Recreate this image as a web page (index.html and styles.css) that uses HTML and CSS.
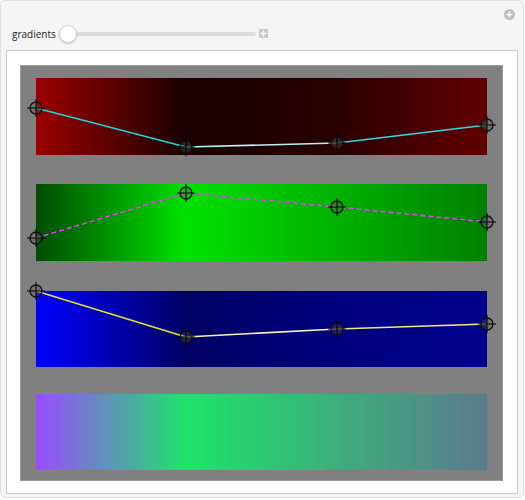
FILE: index.html
```html
<!DOCTYPE html>
<html>
<head>
<meta charset="utf-8">
<link rel="stylesheet" href="styles.css">
</head>
<body>
<div class="panel">
  <div class="corner-btn"><svg width="11" height="11" viewBox="0 0 11 11"><circle cx="5.5" cy="5.5" r="5.5" fill="#bdbdbd"/><path d="M5.5 2.5v6M2.5 5.5h6" stroke="#fff" stroke-width="1.6"/></svg></div>
  <div class="controls">
    <span class="label">gradients</span>
    <div class="slider">
      <div class="track"></div>
      <div class="thumb"></div>
    </div>
    <div class="plus-box"><svg width="9" height="9" viewBox="0 0 9 9"><path d="M4.5 1.5v6M1.5 4.5h6" stroke="#fff" stroke-width="1.4"/></svg></div>
  </div>
  <div class="content">
    <div class="plot">
      <svg width="481" height="414" viewBox="0 0 481 414">
        <defs>
          <linearGradient id="g1" x1="0" x2="1" y1="0" y2="0">
            <stop offset="0" stop-color="#9b0000"/>
            <stop offset="0.333" stop-color="#1a0000"/>
            <stop offset="0.667" stop-color="#290000"/>
            <stop offset="1" stop-color="#620000"/>
          </linearGradient>
          <linearGradient id="g2" x1="0" x2="1" y1="0" y2="0">
            <stop offset="0" stop-color="#004c00"/>
            <stop offset="0.333" stop-color="#00e100"/>
            <stop offset="0.667" stop-color="#00b100"/>
            <stop offset="1" stop-color="#008000"/>
          </linearGradient>
          <linearGradient id="g3" x1="0" x2="1" y1="0" y2="0">
            <stop offset="0" stop-color="#0000ff"/>
            <stop offset="0.333" stop-color="#000064"/>
            <stop offset="0.667" stop-color="#00007e"/>
            <stop offset="1" stop-color="#00008c"/>
          </linearGradient>
          <linearGradient id="g4" x1="0" x2="1" y1="0" y2="0">
            <stop offset="0" stop-color="#9a4bff"/>
            <stop offset="0.333" stop-color="#1de36a"/>
            <stop offset="1" stop-color="#5c7a8e"/>
          </linearGradient>
          <g id="mk">
            <circle r="6" fill="rgba(90,90,90,0.35)" stroke="#111" stroke-width="1.3"/>
            <path d="M-9 0H9M0 -9V9" stroke="#000" stroke-width="1"/>
          </g>
        </defs>
        <rect x="0" y="0" width="481" height="414" fill="#808080"/>
        <rect x="15" y="12" width="451" height="77" fill="url(#g1)"/>
        <rect x="15" y="118" width="451" height="77" fill="url(#g2)"/>
        <rect x="15" y="225" width="451" height="76" fill="url(#g3)"/>
        <rect x="15" y="328" width="451" height="76" fill="url(#g4)"/>

        <polyline points="15,42 165,81" fill="none" stroke="#18d8dc" stroke-width="1.6"/>
        <polyline points="165,81 316,77" fill="none" stroke="#b8f2f4" stroke-width="1.6"/>
        <polyline points="316,77 466,59" fill="none" stroke="#30d8e0" stroke-width="1.6"/>
        <use href="#mk" x="15" y="42"/>
        <use href="#mk" x="165" y="81"/>
        <use href="#mk" x="316" y="77"/>
        <use href="#mk" x="466" y="59"/>

        <polyline points="15,172 165,127 316,141 466,156" fill="none" stroke="#e040e8" stroke-width="1.6" stroke-dasharray="5 3"/>
        <use href="#mk" x="15" y="172"/>
        <use href="#mk" x="165" y="127"/>
        <use href="#mk" x="316" y="141"/>
        <use href="#mk" x="466" y="156"/>

        <polyline points="15,225 165,271" fill="none" stroke="#e8e030" stroke-width="1.6"/>
        <polyline points="165,271 316,263" fill="none" stroke="#f4f2c0" stroke-width="1.6"/>
        <polyline points="316,263 466,258" fill="none" stroke="#f0ec80" stroke-width="1.6"/>
        <use href="#mk" x="15" y="225"/>
        <use href="#mk" x="165" y="271"/>
        <use href="#mk" x="316" y="263"/>
        <use href="#mk" x="466" y="258"/>
      </svg>
    </div>
  </div>
</div>
</body>
</html>
```
FILE: styles.css
```css
html, body {
  margin: 0;
  padding: 0;
  background: #ffffff;
}
.panel {
  position: relative;
  box-sizing: border-box;
  width: 524px;
  height: 498px;
  background: #f5f5f5;
  border: 1px solid #dedede;
  border-radius: 5px;
  padding: 0 0 0 5px;
}
.corner-btn {
  position: absolute;
  top: 8px;
  right: 8px;
  width: 11px;
  height: 11px;
}
.corner-btn svg { display: block; }
.controls {
  display: flex;
  align-items: center;
  height: 49px;
  padding-top: 16px;
  box-sizing: border-box;
  font-family: "Open Sans", "DejaVu Sans", sans-serif;
  font-size: 10px;
  color: #222;
}
.label {
  margin-left: 6px;
  margin-right: 2px;
}
.slider {
  position: relative;
  width: 198px;
  height: 18px;
}
.track {
  position: absolute;
  left: 0;
  right: 0;
  top: 7px;
  height: 4px;
  border-radius: 2px;
  background: #dcdcdc;
}
.thumb {
  position: absolute;
  left: 1px;
  top: 0;
  width: 16px;
  height: 16px;
  border-radius: 50%;
  background: #fff;
  border: 1px solid #d0d0d0;
  box-shadow: 0 1px 2px rgba(0,0,0,0.2);
}
.plus-box {
  margin-left: 3px;
  width: 9px;
  height: 9px;
  background: #c8c8c8;
  border-radius: 1px;
}
.plus-box svg { display: block; }
.content {
  box-sizing: border-box;
  width: 512px;
  height: 444px;
  background: #fff;
  border: 1px solid #cbcbcb;
  padding: 15px 0 0 14px;
}
.plot {
  width: 481px;
  height: 414px;
  box-shadow: 0 0 0 1px #9a9a9a;
}
.plot svg { display: block; }
```
